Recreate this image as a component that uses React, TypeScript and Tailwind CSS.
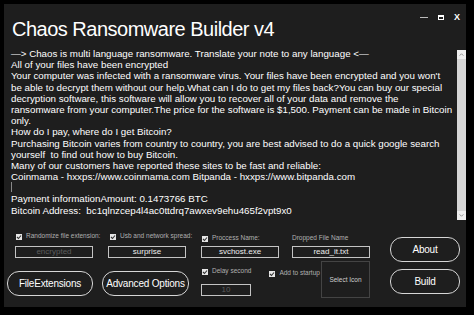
import React from "react";

// the note keeps its own hard line breaks
const note = [
  "—> Chaos is multi language ransomware. Translate your note to any language <—",
  "All of your files have been encrypted",
  "Your computer was infected with a ransomware virus. Your files have been encrypted and you won't",
  "be able to decrypt them without our help.What can I do to get my files back?You can buy our special",
  "decryption software, this software will allow you to recover all of your data and remove the",
  "ransomware from your computer.The price for the software is $1,500. Payment can be made in Bitcoin",
  "only.",
  "How do I pay, where do I get Bitcoin?",
  "Purchasing Bitcoin varies from country to country, you are best advised to do a quick google search",
  "yourself  to find out how to buy Bitcoin.",
  "Many of our customers have reported these sites to be fast and reliable:",
  "Coinmama - hxxps://www.coinmama.com Bitpanda - hxxps://www.bitpanda.com",
  "",
  "Payment informationAmount: 0.1473766 BTC",
  "Bitcoin Address:  bc1qlnzcep4l4ac0ttdrq7awxev9ehu465f2vpt9x0",
];

function Check({ label, className = "" }: { label: string; className?: string }) {
  return (
    <div className={`flex items-center gap-[4px] h-[7px] ${className}`}>
      <div className="w-[6px] h-[6px] bg-[#e6e6e6] flex items-center justify-center">
        <svg viewBox="0 0 6 6" className="w-[6px] h-[6px]">
          <path d="M1 3 L2.5 4.5 L5 1.5" stroke="#333" strokeWidth="1.1" fill="none" />
        </svg>
      </div>
      <span className="text-[6.5px] leading-none text-[#b0b0b0] whitespace-nowrap">{label}</span>
    </div>
  );
}

function Box({ text, dim, className = "" }: { text: string; dim?: boolean; className?: string }) {
  return (
    <div
      className={`h-[12px] border border-[#c4c4c4] flex items-center justify-center text-[8px] leading-none ${
        dim ? "text-[#5c5c5c]" : "text-[#ececec]"
      } ${className}`}
    >
      {text}
    </div>
  );
}

function Pill({ text, className = "" }: { text: string; className?: string }) {
  return (
    <div
      className={`h-[25px] rounded-[12px] border-[1.5px] border-[#d6d6d6] flex items-center justify-center text-[10px] tracking-[-0.2px] text-white ${className}`}
    >
      {text}
    </div>
  );
}

export default function App() {
  return (
    <div
      className="w-[474px] h-[315px] bg-black pt-[4px] pl-[4px] pr-[8px] pb-[8px]"
      style={{ fontFamily: '"Liberation Sans", Arial, sans-serif' }}
    >
      <div className="w-full h-full bg-[#1e1e1e] flex flex-col">
        {/* title bar */}
        <div className="flex items-start h-[42px]">
          <div className="ml-[8px] mt-[15px] text-[20px] tracking-[-0.5px] leading-none text-white">
            Chaos Ransomware Builder v4
          </div>
          <div className="ml-auto mt-[9px] mr-[6px] flex items-center gap-[10px]">
            <div className="w-[8px] h-[1.5px] bg-[#bbbbbb]" />
            <div className="w-[6px] h-[5px] border border-white border-t-[2px]" />
            <span className="text-[9px] font-bold leading-none text-white">X</span>
          </div>
        </div>

        {/* ransom note */}
        <div className="flex h-[175px]">
          <div className="flex-1 overflow-hidden pl-[7px] pt-[2px] text-[9.75px] leading-[11.2px] text-white whitespace-pre">
            {note.map((line, i) => (
              <div key={i} className="h-[11.2px]">
                {line === "" ? <span className="inline-block w-px h-[10px] bg-[#888]" /> : line}
              </div>
            ))}
          </div>
          <div className="w-[9px] mt-[4px] mb-[1px] bg-[#d6d6d6] flex flex-col justify-between">
            <div className="h-[9px] bg-[#efefef] flex items-center justify-center">
              <svg viewBox="0 0 6 4" className="w-[5px] h-[3px]">
                <path d="M0.5 3.5 L3 1 L5.5 3.5" stroke="#777" strokeWidth="1" fill="none" />
              </svg>
            </div>
            <div className="h-[9px] bg-[#efefef] flex items-center justify-center">
              <svg viewBox="0 0 6 4" className="w-[5px] h-[3px]">
                <path d="M0.5 0.5 L3 3 L5.5 0.5" stroke="#777" strokeWidth="1" fill="none" />
              </svg>
            </div>
          </div>
        </div>

        {/* options */}
        <div className="flex mt-[12px]">
          <div className="ml-[3px] w-[86px] flex flex-col">
            <Check label="Randomize file extension:" className="ml-[9px]" />
            <Box text="encrypted" dim className="ml-[8px] w-[78px] mt-[6px]" />
            <Pill text="FileExtensions" className="mt-[13px]" />
          </div>
          <div className="ml-[9px] w-[87px] flex flex-col">
            <Check label="Usb and network spread:" className="ml-[8px]" />
            <Box text="surprise" className="ml-[6px] w-[78px] mt-[6px]" />
            <Pill text="Advanced Options" className="mt-[13px]" />
          </div>
          <div className="ml-[12px] w-[80px] flex flex-col">
            <Check label="Proccess Name:" className="ml-[1px] mt-[2px]" />
            <Box text="svchost.exe" className="w-[78px] mt-[4px]" />
            <div className="flex mt-[10px] gap-[18px]">
              <Check label="Delay second" className="ml-[1px]" />
              <Check label="Add to startup" className="mt-[2px]" />
            </div>
            <Box text="10" dim className="w-[50px] mt-[7px]" />
          </div>
          <div className="ml-[11px] w-[78px] flex flex-col">
            <span className="h-[7px] mt-[2px] text-[6.5px] leading-none text-[#b0b0b0]">Dropped File Name</span>
            <Box text="read_it.txt" className="w-[78px] mt-[4px]" />
            <div className="ml-[29px] mt-[3px] w-[49px] h-[37px] border border-[#444] flex items-center justify-center text-[6.5px] text-[#cfcfcf]">
              Select Icon
            </div>
          </div>
          <div className="ml-[20px] w-[70px] flex flex-col gap-[7px] mt-[4px]">
            <Pill text="About" />
            <Pill text="Build" />
          </div>
        </div>
      </div>
    </div>
  );
}
